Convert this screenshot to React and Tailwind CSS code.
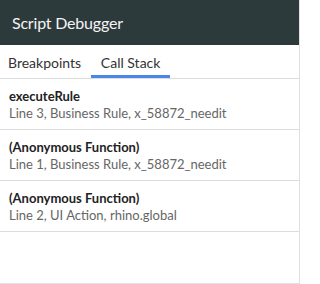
export default function App() {
  const rows = [
    { t: "executeRule", s: "Line 3, Business Rule, x_58872_needit" },
    { t: "(Anonymous Function)", s: "Line 1, Business Rule, x_58872_needit" },
    { t: "(Anonymous Function)", s: "Line 2, UI Action, rhino.global" },
  ];
  return (
    <div className="w-[300px] h-[284px] bg-white flex flex-col border-b border-r border-[#e0e0e0]" style={{ fontFamily: "Lato, 'Liberation Sans', sans-serif" }}>
      <div className="h-[45px] bg-[#2d3a3c] flex items-center px-[12px]">
        <span className="text-[16px] text-[#f4f4f4] tracking-[-0.2px]">Script Debugger</span>
      </div>
      <div className="h-[34px] flex border-b border-[#dcdcdc] text-[14px] text-[#333]">
        <div className="px-[8px] flex items-center pt-[2px]">Breakpoints</div>
        <div className="ml-[2px] w-[79px] justify-center flex items-center border-b-[3px] border-[#4a86e8] pt-[5px]">Call Stack</div>
      </div>
      {rows.map((r, i) => (
        <div key={i} className="h-[51px] border-b border-[#dcdcdc] px-[9px] flex flex-col justify-center pt-[1px]">
          <div className="text-[13px] font-bold text-[#222] leading-[17px]">{r.t}</div>
          <div className="text-[13px] text-[#666] leading-[17px]">{r.s}</div>
        </div>
      ))}
    </div>
  );
}
